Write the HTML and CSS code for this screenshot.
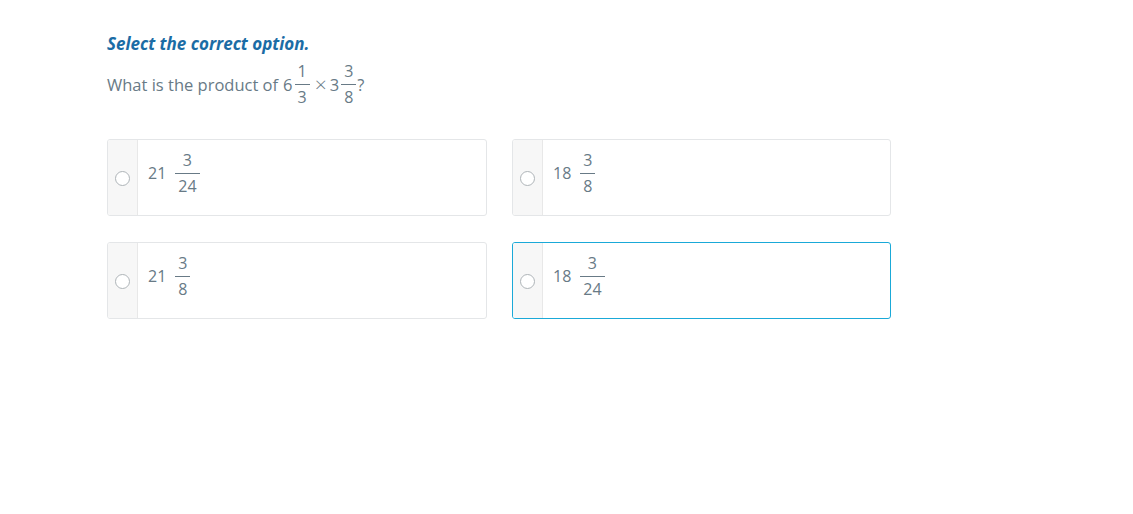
FILE: index.html
```html
<!DOCTYPE html>
<html lang="en">
<head>
    <meta charset="UTF-8">
    <title>Select the correct option</title>
    <link rel="stylesheet" href="styles.css">
</head>
<body>

    <div class="question">
        <h2 class="prompt">Select the correct option.</h2>
        <p class="stem">
            <span class="lead">What is the product of</span>
            <span class="whole">6</span><span class="frac"><span class="num">1</span><span class="den">3</span></span>
            <span class="times">&times;</span>
            <span class="whole">3</span><span class="frac"><span class="num">3</span><span class="den">8</span></span><span class="mark">?</span>
        </p>

        <div class="options">
            <label class="option">
                <span class="radio-cell"><span class="radio"></span></span>
                <span class="answer"><span class="whole">21</span><span class="frac"><span class="num">3</span><span class="den">24</span></span></span>
            </label>
            <label class="option">
                <span class="radio-cell"><span class="radio"></span></span>
                <span class="answer"><span class="whole">18</span><span class="frac"><span class="num">3</span><span class="den">8</span></span></span>
            </label>
            <label class="option">
                <span class="radio-cell"><span class="radio"></span></span>
                <span class="answer"><span class="whole">21</span><span class="frac"><span class="num">3</span><span class="den">8</span></span></span>
            </label>
            <label class="option active">
                <span class="radio-cell"><span class="radio"></span></span>
                <span class="answer"><span class="whole">18</span><span class="frac"><span class="num">3</span><span class="den">24</span></span></span>
            </label>
        </div>
    </div>

</body>
</html>
```

FILE: styles.css
```css
body {
    margin: 0;
    font-family: "Open Sans", "Noto Sans", sans-serif;
    background: #fff;
    color: #687a86;
}

.question {
    width: 784px;
    margin-left: 107px;
    padding-top: 33px;
}

.prompt {
    margin: 0;
    font-size: 17px;
    line-height: 22px;
    font-style: italic;
    font-weight: 700;
    color: #1b6ca5;
}

.stem {
    margin: 0;
    font-size: 16.5px;
    height: 58px;
    display: flex;
    align-items: center;
    white-space: nowrap;
}

.lead {
    margin-right: 5px;
}

.times {
    margin: 0 3px 0 5px;
    font-size: 21px;
    font-weight: 300;
    line-height: 1;
}

.mark {
    margin-left: 1px;
}

.frac {
    display: inline-flex;
    flex-direction: column;
    align-items: center;
    margin-left: 2px;
    line-height: 18px;
    font-size: 16px;
}

.num {
    padding: 0 3px 4px;
    border-bottom: 1px solid #687a86;
    align-self: stretch;
    text-align: center;
}

.den {
    padding: 3px 3px 0;
}

.options {
    display: grid;
    grid-template-columns: 380px 379px;
    column-gap: 25px;
    row-gap: 26px;
    margin-top: 26px;
}

.option {
    display: flex;
    height: 77px;
    box-sizing: border-box;
    border: 1px solid #e4e6e8;
    border-radius: 3px;
    overflow: hidden;
    cursor: pointer;
}

.option.active {
    border-color: #1aa9d8;
}

.radio-cell {
    width: 29px;
    background: #f7f7f7;
    border-right: 1px solid #e8e8e8;
    display: flex;
    align-items: center;
    justify-content: center;
}

.radio {
    width: 13px;
    height: 13px;
    border: 1px solid #aeb4b8;
    border-radius: 50%;
    background: #fff;
    margin-top: 1px;
}

.answer {
    display: flex;
    align-items: center;
    padding: 0 0 10px 10px;
    font-size: 16px;
}

.answer .frac {
    margin-left: 9px;
}
```
